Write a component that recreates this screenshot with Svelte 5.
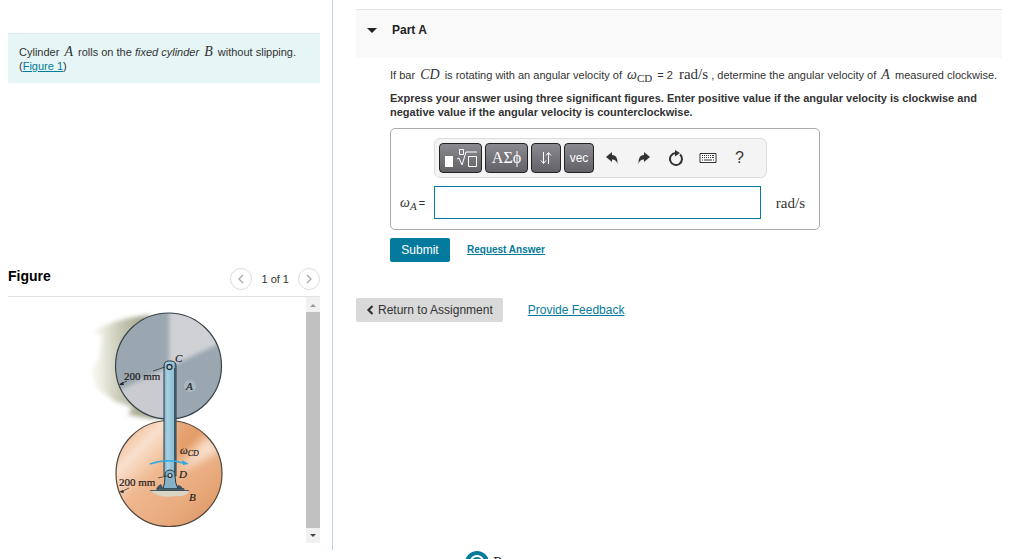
<!-- Assignment item: problem text and figure on the left, answer form on the right -->
<script>
	let answer = '';
	let open = true;

	const keys = [4, 6, 8, 10, 12];

	function reset() {
		answer = '';
	}
</script>

<div class="page">
	<aside>
		<section class="problem">
			Cylinder <i class="math">A</i> rolls on the <em>fixed cylinder</em> <i class="math">B</i> without slipping.<br />
			(<a href="#figure">Figure 1</a>)
		</section>

		<section class="figure" id="figure">
			<header class="figure-head">
				<h2>Figure</h2>
				<nav>
					<button class="round" aria-label="Previous figure">
						<svg width="10" height="10" viewBox="0 0 10 10"><path d="M7 1 3 5l4 4" /></svg>
					</button>
					<span>1 of 1</span>
					<button class="round" aria-label="Next figure">
						<svg width="10" height="10" viewBox="0 0 10 10"><path d="m3 1 4 4-4 4" /></svg>
					</button>
				</nav>
			</header>
			<div class="viewer">
				<svg class="drawing" viewBox="8 297 298 246" role="img" aria-label="Cylinder A rolling on fixed cylinder B">
					<defs>
						<clipPath id="clipA"><circle cx="168.5" cy="366" r="53" /></clipPath>
						<clipPath id="clipB"><circle cx="169" cy="473.5" r="53" /></clipPath>
						<filter id="soft" x="-30%" y="-30%" width="160%" height="160%"><feGaussianBlur stdDeviation="2.2" /></filter>
						<filter id="glow" x="-50%" y="-50%" width="200%" height="200%"><feGaussianBlur stdDeviation="5" /></filter>
						<filter id="trail" x="-30%" y="-30%" width="160%" height="160%"><feGaussianBlur stdDeviation="2" /></filter>
						<linearGradient id="copper" x1="0.1" y1="0.1" x2="0.9" y2="0.9">
							<stop offset="0" stop-color="#f0bd95" />
							<stop offset="0.18" stop-color="#f9e0cd" />
							<stop offset="0.42" stop-color="#efb88f" />
							<stop offset="0.75" stop-color="#e9ab7e" />
							<stop offset="1" stop-color="#df9a69" />
						</linearGradient>
						<linearGradient id="fade" gradientUnits="userSpaceOnUse" x1="92" y1="0" x2="140" y2="0">
							<stop offset="0" stop-color="#e8e8d8" stop-opacity="0.3" />
							<stop offset="0.5" stop-color="#cfd0bd" />
							<stop offset="1" stop-color="#a9ab93" />
						</linearGradient>
						<linearGradient id="steel" x1="0" x2="1">
							<stop offset="0" stop-color="#83b0c8" />
							<stop offset="0.3" stop-color="#a8d0e3" />
							<stop offset="0.8" stop-color="#8fbdd3" />
							<stop offset="1" stop-color="#507387" />
						</linearGradient>
					</defs>

					<!-- motion trail -->
					<path d="M150 315Q115 318 92 332l10 3-3 24-8 10 5 18 18 14 18 6-4 8 24 4 18-2Z" fill="url(#fade)" filter="url(#trail)" />

					<!-- cylinder A -->
					<circle cx="168.5" cy="366" r="53" fill="#9aa7b1" />
					<g clip-path="url(#clipA)">
						<g filter="url(#soft)">
							<path d="M169 367 169 300 206 296 240 334Z" fill="#d0d1d5" />
							<path d="M169 367 102 398 128 438 172 436Z" fill="#c9cbd0" />
						</g>
					</g>
					<circle cx="168.5" cy="366" r="53" fill="none" stroke="#38434a" stroke-width="1.2" />

					<!-- cylinder B -->
					<circle cx="169" cy="473.5" r="53" fill="url(#copper)" />
					<g clip-path="url(#clipB)">
						<path d="M172 410h46l-10 22-34 30Z" fill="#d7803f" opacity="0.5" filter="url(#glow)" />
						<path d="M175 474 208 436 222 450Z" fill="#fdeee2" opacity="0.8" filter="url(#glow)" />
					</g>
					<circle cx="169" cy="473.5" r="53" fill="none" stroke="#54483e" stroke-width="1.2" />

					<!-- bar CD -->
					<path d="M164 476V366q0-5 5-5h2q5 0 5 5v110Z" fill="url(#steel)" stroke="#263b46" />
					<path d="M175 368v104" stroke="#3d5a6a" stroke-width="2" />
					<circle cx="169.5" cy="367" r="2.5" fill="#b9c3ca" stroke="#26343c" stroke-width="1.3" />

					<!-- support at D -->
					<path d="M150 490h39q-1 7-13 6-18 3-26-6Z" fill="#d9d4c4" />
					<path d="m156 489 2-3 3-2 2 4Zm20 0 2-4 3 1 2 3Z" fill="#40545f" />
					<path d="M163 489q2-6 2-13 0-6 5-6t5 6q0 7 3 13Z" fill="#86b2c8" stroke="#263b46" />
					<path d="M157 488.5h27v1.500h-27Z" fill="#507387" stroke="#263b46" stroke-width="0.6" />
					<path d="M150 490.5h39" stroke="#263b46" stroke-width="0.8" />
					<circle cx="170" cy="475.5" r="2" fill="#d6dce0" stroke="#26343c" stroke-width="1.2" />

					<!-- direction of rotation -->
					<path d="M150 464q18-6 33-1" fill="none" stroke="#31a9e0" stroke-width="1.5" />
					<path d="m189 464-7-4 1 5Z" fill="#31a9e0" />

					<!-- dimensions -->
					<path d="M153 371l12-4M120 384l7-3M158 478l9-2M121 492l8-4" stroke="#222" stroke-width="0.7" />
					<path d="m119 385 4-3 1 3ZM119 492l4-2 1 3Z" fill="#222" />
					<circle cx="190" cy="386" r="6" fill="#b5c3cb" opacity="0.6" />
					<g class="labels">
						<text x="124" y="380">200 mm</text>
						<text x="119" y="486">200 mm</text>
						<text x="175" y="362" class="it">C</text>
						<text x="186" y="390" class="it">A</text>
						<text x="179" y="478" class="it">D</text>
						<text x="189" y="501" class="it">B</text>
						<text x="180" y="454" class="it">ω<tspan class="small" dy="2">CD</tspan></text>
					</g>
				</svg>
				<div class="scrollbar">
					<button aria-label="Scroll up"><svg width="6" height="4" viewBox="0 0 6 4"><path d="M0 4 3 1l3 3Z" fill="#999" /></svg></button>
					<div class="thumb"></div>
					<button aria-label="Scroll down"><svg width="6" height="4" viewBox="0 0 6 4"><path d="m0 0 3 3 3-3Z" fill="#444" /></svg></button>
				</div>
			</div>
		</section>
	</aside>

	<main>
		<header class="part-head">
			<button class="toggle" aria-label="Toggle part" aria-expanded={open} on:click={() => (open = !open)}>
				<svg width="10" height="5" viewBox="0 0 10 5"><path d="M0 0h10L5 5Z" fill="#222" /></svg>
			</button>
			<h1>Part A</h1>
		</header>

		{#if open}
			<section class="part">
				<p>
					If bar <i class="math">CD</i> is rotating with an angular velocity of <i class="math">ω<sub class="upright">CD</sub></i> = 2&nbsp; <span class="math unit">rad/s</span> , determine the angular velocity of <i class="math">A</i> measured clockwise.
				</p>
				<p class="strong">
					Express your answer using three significant figures. Enter positive value if the angular velocity is clockwise and negative value if the angular velocity is counterclockwise.
				</p>

				<form on:submit|preventDefault>
					<div class="answer">
						<div class="toolbar">
							<button type="button" class="key wide" aria-label="Templates">
								<svg width="34" height="20" viewBox="0 0 34 20" fill="none" stroke="#fff">
									<path d="M1 8h8v11H1Z" fill="#fff" stroke="none" />
									<path d="M15.5 1.5h4v5h-4ZM24.5 8.5h8v10h-8Z" />
									<path d="m13 11 2-1 3 7 4-13h11" />
								</svg>
							</button>
							<button type="button" class="key wide greek">ΑΣϕ</button>
							<button type="button" class="key" aria-label="Subscripts and arrows">
								<svg width="14" height="14" viewBox="0 0 14 14" fill="none" stroke="#fff"><path d="M4.5 1v11M2 9.500l2.500 3 2.500-3M9.500 13V2M7 4.500l2.500-3 2.500 3" /></svg>
							</button>
							<button type="button" class="key">vec</button>
							<button type="button" class="icon" aria-label="Undo">
								<svg width="14" height="14" viewBox="0 0 14 14"><path d="M1 6 7 1v3q6 0 5.500 9Q11 8 7 8.500V11Z" fill="#333" /></svg>
							</button>
							<button type="button" class="icon" aria-label="Redo">
								<svg width="14" height="14" viewBox="0 0 14 14"><path d="M13 6 7 1v3q-6 0-5.500 9Q3 8 7 8.500V11Z" fill="#333" /></svg>
							</button>
							<button type="button" class="icon" aria-label="Reset" on:click={reset}>
								<svg width="16" height="16" viewBox="0 0 16 16"><path d="M12 4.500A6 6 0 1 1 7.500 3" fill="none" stroke="#333" stroke-width="2" /><path d="m7 0 5 3-5 3.500Z" fill="#333" /></svg>
							</button>
							<button type="button" class="icon" aria-label="Keyboard">
								<svg width="18" height="12" viewBox="0 0 18 12">
									<path d="M1 1.500h16v9H1Z" fill="#fff" stroke="#333" />
									{#each keys as x}
										<path d="M{x - 1} 3.500h1M{x - 1} 5.500h1" stroke="#333" />
									{/each}
									<path d="M13 3.500h2M13 5.500h2M3 8h1M5 8h8M14 8h1" stroke="#333" />
								</svg>
							</button>
							<button type="button" class="icon help" aria-label="Help">?</button>
						</div>
						<label for="omega"><i class="math">ω<sub>A</sub></i>=</label>
						<input id="omega" type="text" autocomplete="off" bind:value={answer} />
						<span class="math unit">rad/s</span>
					</div>
					<div class="actions">
						<button type="submit" class="submit">Submit</button>
						<a href="#answer">Request Answer</a>
					</div>
				</form>
			</section>
		{/if}

		<div class="links">
			<button class="return">
				<svg width="8" height="10" viewBox="0 0 8 10"><path d="M6.500 1 2.500 5l4 4" fill="none" stroke="#333" stroke-width="2.200" /></svg>
				Return to Assignment
			</button>
			<a href="#feedback">Provide Feedback</a>
		</div>

		<footer>
			<svg width="24" height="24" viewBox="0 0 24 24">
				<circle cx="12" cy="12" r="12" fill="#047a9c" />
				<path d="M6 9q2-4 6-4t6 4" fill="none" stroke="#fff" stroke-width="2" />
				<path d="M10 19v-9q5-2 5 1t-4 3" fill="none" stroke="#fff" stroke-width="2" />
			</svg>
			Pearson
		</footer>
	</main>
</div>

<style>
	:global(body) {
		background: #fff;
		color: #333;
		font-family: "Liberation Sans", Arial, sans-serif;
		font-size: 11px;
		line-height: 14px;
	}

	.page {
		display: grid;
		grid-template-columns: 333fr 691fr;
		height: 100vh;
		overflow: hidden;
	}

	button {
		font-family: inherit;
		color: inherit;
		padding: 0;
		border: none;
		background: none;
		cursor: pointer;
	}

	svg {
		display: block;
	}

	a {
		color: #047a9c;
	}

	h1, h2 {
		margin: 0;
		font-size: 12px;
	}

	p {
		margin: 0 0 9px;
	}

	.math {
		margin: 0 2px;
		font-family: "Liberation Serif", "Times New Roman", serif;
		font-size: 14px;
		line-height: 0;
	}

	sub {
		font-size: 11px;
		line-height: 0;
		vertical-align: -3px;
	}

	.upright {
		font-style: normal;
	}

	.unit {
		margin: 0;
		font-size: 15px;
	}

	/* left column */
	aside {
		display: flex;
		flex-direction: column;
		justify-content: space-between;
		box-sizing: border-box;
		margin-bottom: 9px;
		padding: 33px 12px 7px 8px;
		border-right: 1px solid #c3d3e6;
	}

	.problem {
		padding: 11px 11px 10px;
		background: #e6f5f6;
		border-top: 1px solid #dcebec;
	}

	.figure-head {
		display: flex;
		justify-content: space-between;
		padding-bottom: 6px;
		border-bottom: 1px solid #e3e3e3;
	}

	h2 {
		color: #000;
		font-size: 14px;
		line-height: 17px;
	}

	nav {
		display: flex;
		align-items: center;
		gap: 9px;
	}

	.round {
		display: grid;
		place-items: center;
		width: 22px;
		height: 22px;
		border: 1px solid #ddd;
		border-radius: 50%;
	}

	.round path {
		fill: none;
		stroke: #aaa;
		stroke-width: 1.4;
	}

	.viewer {
		display: flex;
	}

	.drawing {
		flex: 1;
		min-width: 0;
	}

	.labels {
		font-family: "Liberation Serif", "Times New Roman", serif;
		font-size: 11px;
		fill: #1c1c1c;
		stroke: #1c1c1c;
		stroke-width: 0.2;
	}

	.it {
		font-style: italic;
	}

	.small {
		font-size: 8px;
	}

	.scrollbar {
		display: flex;
		flex-direction: column;
		width: 14px;
		background: #f1f1f1;
	}

	.scrollbar button {
		display: grid;
		place-items: center;
		height: 15px;
	}

	.thumb {
		flex: 1;
		background: #c1c1c1;
	}

	/* right column */
	main {
		display: flex;
		flex-direction: column;
		padding: 9px 22px 0 23px;
	}

	.part-head {
		display: flex;
		align-items: flex-start;
		gap: 15px;
		padding: 13px 11px 20px;
		background: #f9f9f9;
		border-top: 1px solid #e4e4e4;
	}

	.toggle {
		display: grid;
		place-items: center;
		height: 15px;
	}

	h1 {
		color: #222;
		line-height: 15px;
	}

	.part {
		padding: 10px 0 0 34px;
		margin-right: -10px;
	}

	.strong {
		font-weight: bold;
		margin-right: 16px;
	}

	.answer {
		display: grid;
		grid-template-columns: 34px 1fr auto;
		row-gap: 8px;
		align-items: center;
		box-sizing: border-box;
		max-width: 430px;
		padding: 9px 14px 10px 9px;
		border: 1px solid #aaa;
		border-radius: 5px;
	}

	.toolbar {
		grid-column: 2 / 4;
		display: flex;
		align-items: center;
		justify-self: start;
		gap: 3px;
		padding: 4px 12px 4px 4px;
		background: #f4f4f4;
		border: 1px solid #ddd;
		border-radius: 6px;
	}

	.key {
		display: grid;
		place-items: center;
		box-sizing: border-box;
		width: 30px;
		height: 30px;
		color: #fff;
		font-size: 12px;
		background: linear-gradient(#8b8a90, #626166);
		border: 1px solid #222;
		border-radius: 4px;
	}

	.wide {
		width: 43px;
	}

	.greek {
		font-family: "Liberation Serif", serif;
		font-size: 16px;
	}

	.icon {
		display: grid;
		place-items: center;
		width: 29px;
		height: 30px;
	}

	.help {
		font-size: 16px;
	}

	label {
		white-space: nowrap;
	}

	label .math {
		margin-left: 0;
	}

	input {
		box-sizing: border-box;
		width: 100%;
		height: 33px;
		padding: 0 6px;
		border: 1px solid #047a9c;
		border-radius: 0;
		font: inherit;
	}

	.answer .unit {
		padding-left: 15px;
	}

	.actions {
		display: flex;
		align-items: center;
		gap: 17px;
		margin-top: 8px;
		font-size: 10px;
		font-weight: bold;
	}

	.submit {
		width: 60px;
		height: 24px;
		color: #fff;
		font-size: 12px;
		background: #047a9c;
		border-radius: 2px;
	}

	.links {
		display: flex;
		align-items: center;
		gap: 25px;
		margin-top: 36px;
		font-size: 12px;
	}

	.return {
		display: flex;
		align-items: center;
		gap: 4px;
		height: 24px;
		padding: 0 10px;
		font-size: 12px;
		background: #d9d9d9;
		border-radius: 2px;
	}

	footer {
		display: flex;
		align-items: center;
		gap: 4px;
		margin: auto 0 -16px 109px;
		font-family: "Liberation Serif", serif;
		font-size: 16px;
	}
</style>
